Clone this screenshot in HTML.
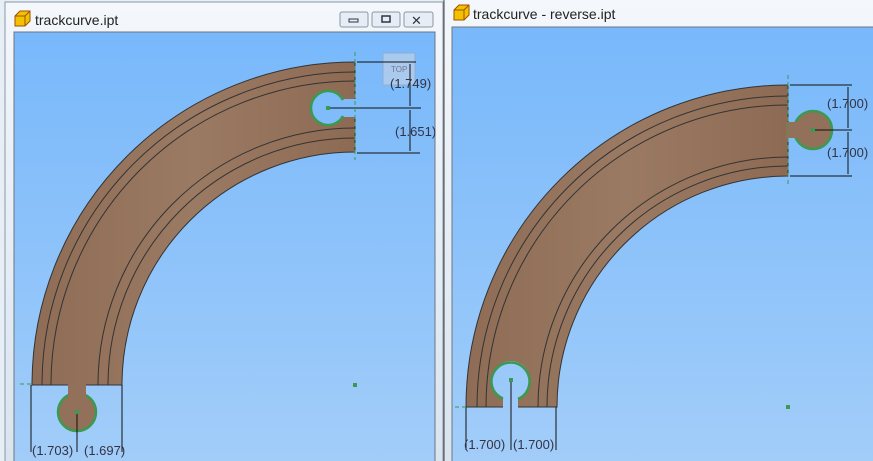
<!DOCTYPE html>
<html><head><style>
html,body{margin:0;padding:0;width:873px;height:461px;overflow:hidden;background:#e8eef5}
svg{display:block}
text{font-family:"Liberation Sans",sans-serif}
</style></head><body>
<svg width="873" height="461" viewBox="0 0 873 461" xmlns="http://www.w3.org/2000/svg">
<defs>
<linearGradient id="bg" x1="0" y1="0" x2="0" y2="1"><stop offset="0" stop-color="#78b8fb"/><stop offset="1" stop-color="#a2cdf9"/></linearGradient>
<linearGradient id="tb" x1="0" y1="0" x2="0" y2="1"><stop offset="0" stop-color="#f4f7fb"/><stop offset="1" stop-color="#d9e4ef"/></linearGradient>
<linearGradient id="wood" x1="0" y1="0" x2="1" y2="0"><stop offset="0" stop-color="#8e6c55"/><stop offset="0.5" stop-color="#9b7a63"/><stop offset="1" stop-color="#8d6a53"/></linearGradient>
<mask id="m1"><rect width="873" height="461" fill="#fff"/><circle cx="328" cy="108" r="17" fill="#000"/><rect x="328" y="99" width="32" height="18" fill="#000"/></mask>
<mask id="m2"><rect width="873" height="461" fill="#fff"/><circle cx="511" cy="380" r="19" fill="#000"/><rect x="503" y="380" width="15" height="32" fill="#000"/></mask>
</defs>
<rect x="5" y="2" width="438" height="462" fill="url(#tb)" stroke="#8a98a8"/>
<rect x="14" y="32" width="421" height="430" fill="url(#bg)" stroke="#6c7682"/>
<rect x="340" y="12" width="28" height="15" rx="2" fill="#e6edf4" stroke="#8a98a8"/>
<rect x="349" y="19" width="9" height="3" fill="none" stroke="#334"/>
<rect x="372" y="12" width="28" height="15" rx="2" fill="#e6edf4" stroke="#8a98a8"/>
<rect x="382" y="16" width="8" height="6" fill="none" stroke="#334" stroke-width="1.5"/>
<rect x="404" y="12" width="29" height="15" rx="2" fill="#e6edf4" stroke="#8a98a8"/>
<text x="411" y="25" font-size="13" fill="#334">✕</text>
<g transform="translate(15,11)"><path d="M0 5 L5 0 L15 0 L15 10 L10 15 L0 15Z" fill="#f2c200" stroke="#a05000"/><path d="M0 5 L10 5 L15 0 M10 5 L10 15" fill="none" stroke="#a05000"/></g>
<text x="35" y="25" font-size="14" fill="#222">trackcurve.ipt</text>
<rect x="444" y="-1" width="430" height="465" fill="url(#tb)" stroke="#444"/>
<rect x="452" y="27" width="422" height="435" fill="url(#bg)" stroke="#6c7682"/>
<g transform="translate(454,5)"><path d="M0 5 L5 0 L15 0 L15 10 L10 15 L0 15Z" fill="#f2c200" stroke="#a05000"/><path d="M0 5 L10 5 L15 0 M10 5 L10 15" fill="none" stroke="#a05000"/></g>
<text x="473" y="19" font-size="14" fill="#222">trackcurve - reverse.ipt</text>

<g mask="url(#m1)"><path d="M355,62 A323,323 0 0 0 32,385 L122,385 A233,233 0 0 1 355,152 Z" fill="url(#wood)" stroke="#333" stroke-width="1"/></g>
<circle cx="77" cy="412" r="19" fill="#93705a" stroke="#3a9a50" stroke-width="2.5"/>
<rect x="68" y="383" width="18" height="16" fill="#93705a"/>
<path d="M343,100 A17,17 0 1 0 343,116" fill="none" stroke="#3a9a50" stroke-width="2.5"/>
<g fill="none" stroke="#333" stroke-width="1">
<path d="M355,72 A313,313 0 0 0 42,385"/><path d="M355,81 A304,304 0 0 0 51,385"/>
<path d="M355,128 A257,257 0 0 0 98,385"/><path d="M355,138 A247,247 0 0 0 108,385"/>
</g>
<rect x="383" y="53" width="32" height="32" fill="#c8d6e6" opacity="0.6" stroke="#9aa8b8"/>
<text x="391" y="72" font-size="8" fill="#778">TOP</text>
<g stroke="#111" stroke-width="1" fill="none">
<path d="M357,62H416M328,108H421M357,153H420M410,64V106M410,110V151M31,385V452M122,385V452M77,412V452"/>
<path d="M355,52V160" stroke="#3a9a50" stroke-dasharray="4,3"/>
<path d="M20,384H32" stroke="#3a9a50" stroke-dasharray="4,3"/>
</g>
<g font-size="13" fill="#334">
<text x="390" y="88">(1.749)</text><text x="395" y="136">(1.651)</text>
<text x="32" y="455">(1.703)</text><text x="84" y="455">(1.697)</text>
</g>
<rect x="353" y="383" width="4" height="4" fill="#3a9a50"/>
<rect x="326" y="106" width="4" height="4" fill="#3a9a50"/>

<g mask="url(#m2)"><path d="M788,85 A322,322 0 0 0 466,407 L557,407 A231,231 0 0 1 788,176 Z" fill="url(#wood)" stroke="#333" stroke-width="1"/></g>
<circle cx="813" cy="130" r="19" fill="#93705a" stroke="#3a9a50" stroke-width="2.5"/>
<rect x="786" y="122" width="14" height="16" fill="#93705a"/>
<path d="M503,399 A19,19 0 1 1 518,399" fill="none" stroke="#3a9a50" stroke-width="2.5"/>
<g fill="none" stroke="#333" stroke-width="1">
<path d="M788,96 A311,311 0 0 0 477,407"/><path d="M788,105 A302,302 0 0 0 486,407"/>
<path d="M788,157 A250,250 0 0 0 538,407"/><path d="M788,166 A241,241 0 0 0 547,407"/>
</g>
<g stroke="#111" stroke-width="1" fill="none">
<path d="M790,85H852M813,130H852M790,176H852M848,87V128M848,132V174M466,407V450M511,380V450M556,407V450"/>
<path d="M788,75V185" stroke="#3a9a50" stroke-dasharray="4,3"/>
<path d="M455,407H466" stroke="#3a9a50" stroke-dasharray="4,3"/>
</g>
<g font-size="13" fill="#334">
<text x="827" y="108">(1.700)</text><text x="827" y="157">(1.700)</text>
<text x="464" y="449">(1.700)</text><text x="513" y="449">(1.700)</text>
</g>
<rect x="786" y="405" width="4" height="4" fill="#3a9a50"/>
<rect x="811" y="128" width="4" height="4" fill="#3a9a50"/>
<rect x="509" y="378" width="4" height="4" fill="#3a9a50"/>
<rect x="75" y="410" width="4" height="4" fill="#3a9a50"/>
</svg>
</body></html>
